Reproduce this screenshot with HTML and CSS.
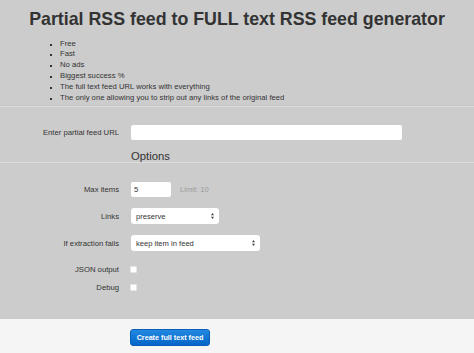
FILE: index.html
```html
<!DOCTYPE html>
<html lang="en">
<head>
<meta charset="utf-8">
<title>Partial RSS feed to FULL text RSS feed generator</title>
<link rel="stylesheet" href="styles.css">
</head>
<body>
<header class="intro">
  <h1 class="title">Partial RSS feed to FULL text RSS feed generator</h1>
  <ul class="features">
    <li>Free</li>
    <li>Fast</li>
    <li>No ads</li>
    <li>Biggest success %</li>
    <li>The full text feed URL works with everything</li>
    <li>The only one allowing you to strip out any links of the original feed</li>
  </ul>
</header>
<div class="sep"></div>
<form class="form">
  <div class="row row-url">
    <label class="lbl">Enter partial feed URL</label>
    <input class="txt url" type="text">
  </div>
  <div class="options-head"><span class="legend">Options</span></div>
  <div class="row row-field">
    <label class="lbl">Max items</label>
    <input class="txt max" type="text" value="5">
    <span class="hint">Limit: 10</span>
  </div>
  <div class="row row-field">
    <label class="lbl">Links</label>
    <div class="sel sel-links"><span>preserve</span><svg class="arrows" viewBox="0 0 4 8" width="3" height="6"><path d="M0 3 L2 0 L4 3 Z M0 5 L2 8 L4 5 Z" fill="#444"/></svg></div>
  </div>
  <div class="row row-field">
    <label class="lbl">If extraction fails</label>
    <div class="sel sel-fail"><span>keep item in feed</span><svg class="arrows" viewBox="0 0 4 8" width="3" height="6"><path d="M0 3 L2 0 L4 3 Z M0 5 L2 8 L4 5 Z" fill="#444"/></svg></div>
  </div>
  <div class="row row-check first-check">
    <label class="lbl">JSON output</label>
    <span class="chk"></span>
  </div>
  <div class="row row-check">
    <label class="lbl">Debug</label>
    <span class="chk"></span>
  </div>
  <div class="actions">
    <button class="btn" type="button">Create full text feed</button>
  </div>
</form>
</body>
</html>
```
FILE: styles.css
```css
html, body {
  margin: 0;
  padding: 0;
  height: 100%;
}
body {
  background: #cccccc;
  font-family: "Liberation Sans", Arial, sans-serif;
  color: #333333;
  display: flex;
  flex-direction: column;
}
.intro {
  padding-top: 7px;
}
.title {
  margin: 0;
  font-size: 17.8px;
  line-height: 24px;
  font-weight: bold;
  text-align: center;
  color: #333;
}
.features {
  margin: 7.6px 0 0 0;
  padding-left: 60px;
  font-size: 7.7px;
  line-height: 10.8px;
  list-style: square;
}
.features li::marker {
  font-size: 6px;
}
.sep {
  margin-top: 2px;
  height: 0;
  border-top: 1px solid #c4c4c4;
  border-bottom: 1px solid #dedede;
}
.form {
  flex: 1;
  display: flex;
  flex-direction: column;
}
.row {
  display: flex;
  align-items: center;
}
.lbl {
  width: 119px;
  flex: none;
  text-align: right;
  font-size: 7.7px;
  color: #333;
  margin-right: 12px;
}
.row-url {
  margin-top: 18px;
  height: 15px;
}
.txt {
  box-sizing: border-box;
  border: none;
  background: #fff;
  border-radius: 2px;
  font-family: inherit;
  font-size: 7.6px;
  color: #333;
  padding: 0 3px;
  margin: 0;
  outline: none;
}
.url {
  width: 271px;
  height: 15px;
}
.options-head {
  height: 22px;
  border-bottom: 1px solid #dcdcdc;
  padding-left: 131px;
  display: flex;
  align-items: flex-end;
}
.legend {
  font-size: 11.3px;
  line-height: 13px;
  color: #333;
  margin-bottom: -1px;
}
.row-field {
  height: 16px;
  margin-top: 11px;
}
.options-head + .row-field {
  margin-top: 18px;
}
.max {
  width: 40px;
  height: 15px;
}
.hint {
  margin-left: 9px;
  font-size: 7.6px;
  color: #9a9a9a;
}
.sel {
  position: relative;
  box-sizing: border-box;
  height: 16px;
  background: #fff;
  border-radius: 3px;
  font-size: 7.6px;
  color: #333;
  display: flex;
  align-items: center;
  padding-left: 5px;
}
.sel-links {
  width: 88px;
}
.sel-fail {
  width: 129px;
}
.arrows {
  position: absolute;
  right: 5px;
  top: 5px;
}
.row-check {
  height: 18px;
}
.first-check {
  margin-top: 9.5px;
}
.chk {
  box-sizing: border-box;
  width: 7px;
  height: 7px;
  margin-left: -1px;
  background: #fff;
  border: 1px solid #e6e6e6;
  border-radius: 1px;
}
.actions {
  margin-top: auto;
  background: #f5f5f5;
  height: 34px;
  box-sizing: border-box;
  padding: 10px 0 0 130px;
}
.btn {
  width: 80px;
  height: 17px;
  box-sizing: border-box;
  border: 1px solid #0a60b6;
  border-radius: 3px;
  background: linear-gradient(#2288e0, #0467c9);
  color: #fff;
  font-family: inherit;
  font-size: 7.2px;
  font-weight: bold;
  padding: 0;
  margin: 0;
  display: block;
}
```
